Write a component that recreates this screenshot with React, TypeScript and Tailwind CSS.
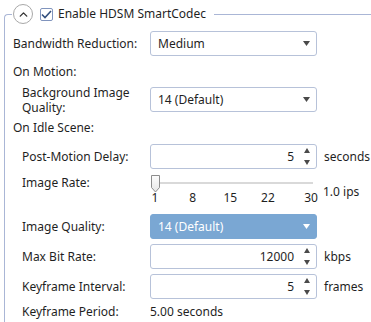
import { ChevronUp } from "lucide-react";

const boxCls = "h-[25px] w-[167px] rounded-[3px] border flex items-center";

const DownTri = ({ color = "#4a4a4a" }: { color?: string }) => (
  <svg width="7" height="5" viewBox="0 0 7 5">
    <path d="M0 0 H7 L3.5 5 Z" fill={color} />
  </svg>
);

const Select = ({ value, active }: { value: string; active?: boolean }) => (
  <div
    className={`${boxCls} justify-between pl-[7px] pr-[6px] ${
      active ? "border-[#7aa7d3] bg-[#7aa7d3] text-white" : "border-[#b7c2d9] bg-white"
    }`}
  >
    <span>{value}</span>
    <DownTri color={active ? "#ffffff" : "#4a4a4a"} />
  </div>
);

const Spin = ({ value }: { value: string }) => (
  <div className={`${boxCls} justify-end border-[#b7c2d9] bg-white pr-[6px]`}>
    <span className="mr-[10px]">{value}</span>
    <div className="flex flex-col items-center gap-[7px]">
      <svg width="6" height="5" viewBox="0 0 6 5">
        <path d="M0 5 H6 L3 0 Z" fill="#4a4a4a" />
      </svg>
      <svg width="6" height="5" viewBox="0 0 6 5">
        <path d="M0 0 H6 L3 5 Z" fill="#4a4a4a" />
      </svg>
    </div>
  </div>
);

const ticks = [1, 8, 15, 22, 30];

const Slider = () => (
  <div className="relative h-[40px] w-[167px]">
    <div className="absolute left-[4px] right-[4px] top-[12px] h-[2px] bg-[#d9d9d9]" />
    <svg className="absolute left-0 top-[5px]" width="11" height="18" viewBox="0 0 11 18">
      <defs>
        <linearGradient id="th" x1="0" x2="0" y1="0" y2="1">
          <stop offset="0" stopColor="#fdfdfd" />
          <stop offset="1" stopColor="#e6e6e6" />
        </linearGradient>
      </defs>
      <path d="M1.5 0.5 H9.5 V12.5 L5.5 17 L1.5 12.5 Z" fill="url(#th)" stroke="#8d8d8d" />
    </svg>
    {ticks.map((t) => (
      <span
        key={t}
        className="absolute top-[20px] -translate-x-1/2 leading-[16px]"
        style={{ left: 5 + ((t - 1) / 29) * 156 }}
      >
        {t}
      </span>
    ))}
  </div>
);

export default function App() {
  return (
    <div
      className="relative h-[322px] w-[371px] overflow-hidden bg-white text-[12px] text-[#1f1f1f]"
      style={{ fontFamily: '"Noto Sans", sans-serif' }}
    >
      <div className="absolute left-[12px] top-[4px] flex items-center bg-white pl-[1px] pr-[8px]">
        <div className="flex h-[20px] w-[20px] items-center justify-center rounded-full border border-[#a8a8a8]">
          <ChevronUp size={13} strokeWidth={2.5} color="#333333" />
        </div>
        <div className="ml-[7px] flex h-[13px] w-[13px] items-center justify-center rounded-[2px] border border-[#8094bd] bg-white">
          <svg width="11" height="9" viewBox="0 0 11 9">
            <path d="M1 4.5 L4 7.5 L10 1" fill="none" stroke="#34507e" strokeWidth="1.6" />
          </svg>
        </div>
        <span className="ml-[5px] leading-[20px]">Enable HDSM SmartCodec</span>
      </div>

      <div className="ml-[4px] mt-[14px] h-[320px] rounded-tl-[4px] border-l border-t border-[#aab6d6] pt-[16px]">
        <div className="flex h-[25px] items-center">
          <div className="w-[145px] pl-[8px]">Bandwidth Reduction:</div>
          <Select value="Medium" />
        </div>

        <div className="mt-[8px] h-[16px] pl-[8px] leading-[16px]">On Motion:</div>

        <div className="mt-[7px] flex h-[25px] items-center">
          <div className="w-[145px] pl-[17px] leading-[15px]">
            Background Image
            <br />
            Quality:
          </div>
          <Select value="14 (Default)" />
        </div>

        <div className="mt-[8px] h-[16px] pl-[8px] leading-[16px]">On Idle Scene:</div>

        <div className="mt-[8px] flex h-[25px] items-center">
          <div className="w-[145px] pl-[17px]">Post-Motion Delay:</div>
          <Spin value="5" />
          <span className="ml-[7px]">seconds</span>
        </div>

        <div className="mt-[1px] flex h-[40px] items-start">
          <div className="w-[145px] pl-[17px] pt-[4px]">Image Rate:</div>
          <Slider />
          <span className="ml-[6px] pt-[13px]">1.0 ips</span>
        </div>

        <div className="mt-[4px] flex h-[25px] items-center">
          <div className="w-[145px] pl-[17px]">Image Quality:</div>
          <Select value="14 (Default)" active />
        </div>

        <div className="mt-[5px] flex h-[25px] items-center">
          <div className="w-[145px] pl-[17px]">Max Bit Rate:</div>
          <Spin value="12000" />
          <span className="ml-[7px]">kbps</span>
        </div>

        <div className="mt-[5px] flex h-[25px] items-center">
          <div className="w-[145px] pl-[17px]">Keyframe Interval:</div>
          <Spin value="5" />
          <span className="ml-[7px]">frames</span>
        </div>

        <div className="mt-[5px] flex h-[16px] items-center">
          <div className="w-[145px] pl-[17px]">Keyframe Period:</div>
          <span>5.00 seconds</span>
        </div>
      </div>
    </div>
  );
}
